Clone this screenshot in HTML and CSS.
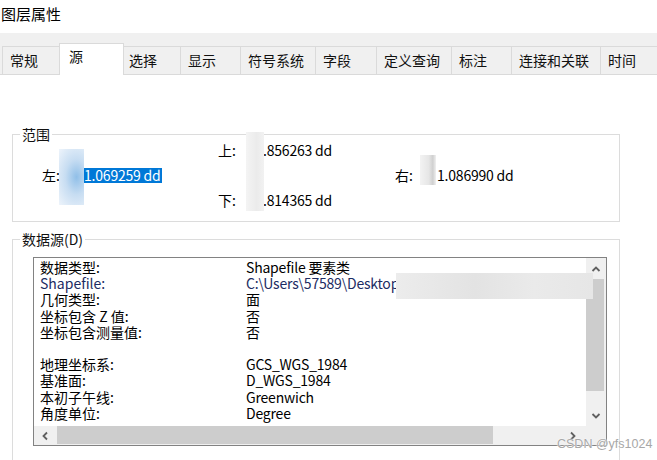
FILE: index.html
```html
<!DOCTYPE html>
<html lang="zh-CN">
<head>
<meta charset="utf-8">
<title>图层属性</title>
<link rel="stylesheet" href="styles.css">
</head>
<body>
<div class="window">
  <div class="title">图层属性</div>
  <div class="tabs">
    <div class="tab">常规</div>
    <div class="tab active">源</div>
    <div class="tab">选择</div>
    <div class="tab">显示</div>
    <div class="tab">符号系统</div>
    <div class="tab">字段</div>
    <div class="tab">定义查询</div>
    <div class="tab">标注</div>
    <div class="tab">连接和关联</div>
    <div class="tab">时间</div>
  </div>

  <div class="page">
    <div class="group extent">
      <span class="group-title">范围</span>
      <div class="extent-grid">
        <span class="lab top-lab">上:</span><span class="val top-val">.856263 dd</span>
        <span class="lab left-lab">左:</span><span class="val left-val"><span class="selected">1.069259 dd</span></span>
        <span class="lab right-lab">右:</span><span class="val right-val">1.086990 dd</span>
        <span class="lab bottom-lab">下:</span><span class="val bottom-val">.814365 dd</span>
        <span class="blur blur-mid"></span>
        <span class="blur blur-left"></span>
        <span class="blur blur-right"></span>
      </div>
    </div>

    <div class="group source">
      <span class="group-title">数据源(D)</span>
      <div class="listbox">
        <div class="list-content">
          <span class="k">数据类型:</span><span class="v">Shapefile 要素类</span>
          <span class="k link">Shapefile:</span><span class="v link">C:\Users\57589\Desktop\</span>
          <span class="k">几何类型:</span><span class="v">面</span>
          <span class="k">坐标包含 Z 值:</span><span class="v">否</span>
          <span class="k">坐标包含测量值:</span><span class="v">否</span>
          <span class="k">&nbsp;</span><span class="v">&nbsp;</span>
          <span class="k">地理坐标系:</span><span class="v">GCS_WGS_1984</span>
          <span class="k">基准面:</span><span class="v">D_WGS_1984</span>
          <span class="k">本初子午线:</span><span class="v">Greenwich</span>
          <span class="k">角度单位:</span><span class="v">Degree</span>
        </div>
        <div class="vscroll">
          <svg class="arrow" width="10" height="8" viewBox="0 0 10 8"><path d="M1.5 6 L5 2.5 L8.5 6" fill="none" stroke="#606060" stroke-width="1.8"/></svg>
          <div class="vthumb"></div>
          <svg class="arrow arrow-down" width="10" height="8" viewBox="0 0 10 8"><path d="M1.5 2 L5 5.5 L8.5 2" fill="none" stroke="#606060" stroke-width="1.8"/></svg>
        </div>
        <div class="hscroll">
          <svg class="harrow" width="8" height="10" viewBox="0 0 8 10"><path d="M6 1.5 L2.5 5 L6 8.5" fill="none" stroke="#606060" stroke-width="1.8"/></svg>
          <div class="hthumb"></div>
          <svg class="harrow harrow-right" width="8" height="10" viewBox="0 0 8 10"><path d="M2 1.5 L5.5 5 L2 8.5" fill="none" stroke="#606060" stroke-width="1.8"/></svg>
        </div>
        <div class="corner"></div>
        <span class="blur blur-path"></span>
      </div>
    </div>
  </div>
  <div class="watermark">CSDN @yfs1024</div>
</div>
</body>
</html>
```

FILE: styles.css
```css
html, body {
  margin: 0;
  padding: 0;
  background: #ffffff;
}

body {
  font-family: "Noto Sans CJK SC", "Noto Sans", sans-serif;
  font-size: 14px;
  color: #000;
  overflow: hidden;
}

.window {
  position: relative;
  width: 657px;
  height: 460px;
  overflow: hidden;
}

.title {
  height: 33px;
  line-height: 28px;
  font-size: 15px;
  padding-left: 1px;
}

/* tabs */
.tabs {
  display: flex;
  align-items: flex-end;
  height: 42px;
  box-sizing: border-box;
  background: #f0f0f0;
  border-bottom: 1px solid #dadada;
  padding-left: 2px;
}

.tab {
  box-sizing: border-box;
  height: 28px;
  line-height: 26px;
  padding-left: 7px;
  border: 1px solid #dadada;
  border-bottom: none;
  margin-left: -1px;
  background: #f0f0f0;
  white-space: nowrap;
  flex: none;
  color: #111;
}

.tab:first-child { margin-left: 0; }
.tab:nth-child(1) { width: 58px; }
.tab:nth-child(2) { width: 65px; }
.tab:nth-child(3) { width: 58px; padding-left: 5px; }
.tab:nth-child(4) { width: 61px; }
.tab:nth-child(5) { width: 76px; }
.tab:nth-child(6) { width: 62px; }
.tab:nth-child(7) { width: 76px; }
.tab:nth-child(8) { width: 61px; }
.tab:nth-child(9) { width: 90px; }
.tab:nth-child(10) { width: 60px; }

.tab.active {
  height: 32px;
  line-height: 24px;
  background: #ffffff;
  margin-bottom: -1px;
  padding-left: 9px;
  position: relative;
  z-index: 1;
}

/* groups */
.page {
  padding: 0 37px 0 12px;
}

.group {
  position: relative;
  border: 1px solid #dcdcdc;
}

.group-title {
  position: absolute;
  left: 7px;
  top: -10px;
  line-height: 18px;
  padding: 0 2px;
  background: #fff;
  color: #111;
}

.extent {
  margin-top: 59px;
}

.extent-grid {
  position: relative;
  display: grid;
  grid-template-columns: 29px 42px 134px 45px 132px 42px 1fr;
  grid-template-rows: 25px 25px 25px;
  align-items: center;
  padding: 2px 0 9px 0;
}

.val { white-space: nowrap; letter-spacing: -0.2px; }

.top-lab { grid-column: 4; grid-row: 1; }
.top-val { grid-column: 5; grid-row: 1; }
.left-lab { grid-column: 2; grid-row: 2; }
.left-val { grid-column: 3; grid-row: 2; justify-self: start; }
.right-lab { grid-column: 6; grid-row: 2; }
.right-val { grid-column: 7; grid-row: 2; }
.bottom-lab { grid-column: 4; grid-row: 3; }
.bottom-val { grid-column: 5; grid-row: 3; }

.selected {
  display: inline-block;
  background: #0078d7;
  color: #fff;
  line-height: 15px;
  padding: 0 1px 0 0;
}

.blur {
  position: absolute;
  display: block;
}

.blur-mid {
  left: 233px;
  top: -3px;
  width: 18px;
  height: 79px;
  background: linear-gradient(90deg, #f4f4f4, #ebebeb 60%, #f2f2f2);
}

.blur-left {
  left: 46px;
  top: 14px;
  width: 25px;
  height: 56px;
  background: radial-gradient(ellipse at 70% 50%, #90bfe8 0%, #c7ddf2 45%, #eef4fb 100%);
}

.blur-right {
  left: 407px;
  top: 20px;
  width: 16px;
  height: 30px;
  background: linear-gradient(90deg, #f3f3f3, #e6e6e6 55%, #d0d0d0 80%, #f0f0f0);
}

.source {
  margin-top: 17px;
  padding: 17px 12px 30px 20px;
}

.listbox {
  position: relative;
  box-sizing: border-box;
  height: 189px;
  border: 1px solid #828282;
  display: grid;
  grid-template-columns: 1fr 20px;
  grid-template-rows: 1fr 19px;
}

.list-content {
  display: grid;
  grid-template-columns: 206px 1fr;
  grid-auto-rows: 16.2px;
  align-content: start;
  padding: 1px 0 0 6px;
  line-height: 16px;
  overflow: hidden;
  white-space: nowrap;
}

.list-content .v { letter-spacing: -0.2px; }

.link { color: #1d2c63; }

.vscroll {
  background: #f0f0f0;
  display: flex;
  flex-direction: column;
  align-items: center;
}

.arrow {
  margin-top: 7px;
  margin-bottom: 6px;
}

.arrow-down {
  margin-top: auto;
  margin-bottom: 6px;
}

.vthumb {
  align-self: flex-start;
  width: 18px;
  height: 112px;
  background: #cdcdcd;
}

.hscroll {
  background: #f0f0f0;
  display: flex;
  align-items: center;
}

.harrow {
  margin-left: 7px;
  margin-right: 8px;
}

.hthumb {
  align-self: stretch;
  width: 436px;
  background: #cdcdcd;
  margin-bottom: 1px;
}

.harrow-right {
  margin-left: auto;
  margin-right: 9px;
}

.corner {
  background: #f0f0f0;
}

.blur-path {
  left: 362px;
  top: 15px;
  width: 197px;
  height: 26px;
  background: linear-gradient(90deg, #ececec, #e3e3e3 40%, #eaeaea 70%, #e6e6e6);
}

.watermark {
  position: absolute;
  left: 557px;
  top: 437px;
  white-space: nowrap;
  font-family: "Liberation Sans", "Noto Sans", sans-serif;
  font-size: 12.5px;
  color: #a8a8a8;
  text-shadow: 0 0 1px #fff, 0 0 2px #fff;
}
```
